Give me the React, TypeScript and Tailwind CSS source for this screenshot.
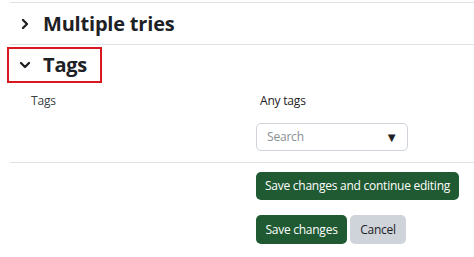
import { ChevronDown, ChevronRight } from "lucide-react";

export default function App() {
  return (
    <div
      className="w-[474px] h-[257px] bg-white overflow-hidden text-[#1d2125]"
      style={{ fontFamily: '"Open Sans", "Noto Sans", sans-serif' }}
    >
      <div className="ml-[10px] mt-[2px] border-t border-[#dee2e6]">
        <div className="flex items-center h-[41px] pl-[7px]">
          <ChevronRight size={16} strokeWidth={3.5} className="text-[#1d2125]" />
          <h3 className="ml-[10px] text-[20px] font-bold leading-none tracking-[-0.2px]">
            Multiple tries
          </h3>
        </div>
      </div>

      <div className="ml-[10px] border-t border-[#dee2e6] pt-[2px]">
        <div className="-ml-[3px] w-[95px] h-[36px] border-[2.5px] border-[#d7191f] flex items-center pl-[8px]">
          <ChevronDown size={16} strokeWidth={3.5} className="text-[#1d2125]" />
          <h3 className="ml-[10px] text-[20px] font-bold leading-none tracking-[-0.2px]">
            Tags
          </h3>
        </div>

        <div className="flex mt-[9px] text-[12px] tracking-[-0.2px]">
          <div className="w-[246px] pl-[21px] text-[#3a3f44]">Tags</div>
          <div className="flex flex-col">
            <div className="pl-[4px]">Any tags</div>
            <div className="mt-[13px] w-[152px] h-[28px] border border-[#ced4da] rounded-[5px] flex items-center justify-between pl-[10px] pr-[9px]">
              <span className="text-[#8a8f94]">Search</span>
              <span className="text-[13px] leading-none">▼</span>
            </div>
          </div>
        </div>

        <div className="mt-[11px] border-t border-[#dee2e6] pl-[246px] pt-[9px] text-[12px] tracking-[-0.25px]">
          <button className="h-[28px] w-[203px] whitespace-nowrap rounded-[5px] bg-[#1f5a32] text-white">
            Save changes and continue editing
          </button>
          <div className="flex gap-[3px] mt-[15px]">
            <button className="h-[29px] w-[91px] whitespace-nowrap rounded-[5px] bg-[#1f5a32] text-white">
              Save changes
            </button>
            <button className="h-[29px] w-[56px] whitespace-nowrap rounded-[5px] bg-[#ced4da] text-[#1d2125]">
              Cancel
            </button>
          </div>
        </div>
      </div>
    </div>
  );
}
